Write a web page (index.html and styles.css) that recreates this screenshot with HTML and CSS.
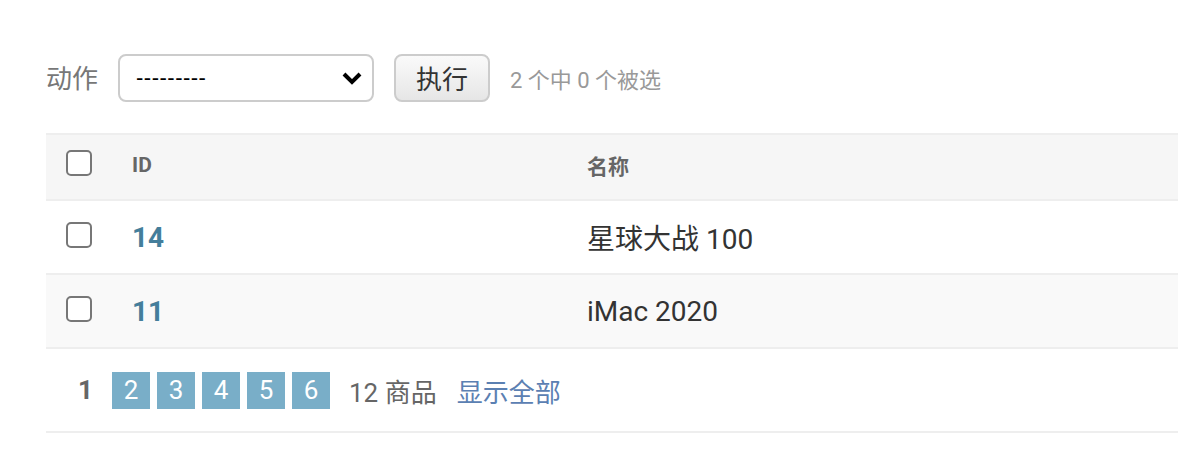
FILE: index.html
```html
<!DOCTYPE html>
<html lang="zh">
<head>
<meta charset="utf-8">
<title>商品</title>
<link rel="stylesheet" href="styles.css">
</head>
<body>
<div class="changelist">
  <div class="actions">
    <label class="action-label">动作</label>
    <div class="select">
      <span class="select-value">---------</span>
      <svg class="chevron" viewBox="0 0 20 14" width="20" height="14"><path d="M2 3 L10 11 L18 3" fill="none" stroke="#000" stroke-width="4" stroke-linejoin="miter"/></svg>
    </div>
    <button class="go">执行</button>
    <span class="counter">2 个中 0 个被选</span>
  </div>
  <table class="result-list">
    <colgroup><col class="c-check"><col class="c-id"><col></colgroup>
    <thead>
      <tr><th class="check"><span class="box"></span></th><th>ID</th><th>名称</th></tr>
    </thead>
    <tbody>
      <tr class="row1"><td class="check"><span class="box"></span></td><td class="id"><a href="#">14</a></td><td>星球大战 100</td></tr>
      <tr class="row2"><td class="check"><span class="box"></span></td><td class="id"><a href="#">11</a></td><td>iMac 2020</td></tr>
    </tbody>
  </table>
  <div class="paginator">
    <span class="this-page">1</span>
    <a class="page" href="#">2</a>
    <a class="page" href="#">3</a>
    <a class="page" href="#">4</a>
    <a class="page" href="#">5</a>
    <a class="page" href="#">6</a>
    <span class="total">12 商品</span>
    <a class="showall" href="#">显示全部</a>
  </div>
</div>
</body>
</html>
```
FILE: styles.css
```css
html, body {
  margin: 0;
  padding: 0;
  background: #fff;
}
body {
  font-family: Roboto, "Noto Sans CJK SC", sans-serif;
  color: #333;
}
.changelist {
  padding: 54px 0 0 46px;
}
.actions {
  display: flex;
  align-items: center;
  height: 48px;
  margin-bottom: 31px;
}
.action-label {
  font-size: 26px;
  color: #777;
  width: 72px;
  margin-top: -3px;
}
.select {
  box-sizing: border-box;
  width: 256px;
  height: 48px;
  border: 2px solid #ccc;
  border-radius: 8px;
  display: flex;
  align-items: center;
  justify-content: space-between;
  padding: 0 8px 0 16px;
  margin-right: 20px;
}
.select-value {
  font-size: 22px;
  color: #000;
  font-family: "Liberation Sans", sans-serif;
  letter-spacing: 0.5px;
}
.chevron {
  width: 20px;
  height: 14px;
  margin-right: 2px;
}
.go {
  box-sizing: border-box;
  width: 96px;
  height: 48px;
  border: 2px solid #ccc;
  border-radius: 8px;
  background: linear-gradient(#fafafa, #e6e6e6);
  font-family: Roboto, "Noto Sans CJK SC", sans-serif;
  font-size: 26px;
  color: #333;
  padding: 0 0 2px 0;
  margin-right: 20px;
}
.counter {
  font-size: 22px;
  color: #999;
}
.result-list {
  width: 100%;
  border-collapse: collapse;
  table-layout: fixed;
}
.c-check { width: 70px; }
.c-id { width: 455px; }
.result-list th {
  background: #f6f6f6;
  height: 59px;
  text-align: left;
  font-size: 21px;
  font-weight: 700;
  color: #666;
  padding: 0 16px 5px 16px;
  border-top: 2px solid #eee;
  border-bottom: 2px solid #eee;
}
.result-list td {
  height: 72px;
  padding: 0 16px;
  font-size: 28px;
  color: #333;
  border-bottom: 2px solid #eee;
  vertical-align: middle;
}
.result-list .check {
  padding-left: 20px;
  padding-right: 0;
}
.row2 td {
  background: #f9f9f9;
}
.box {
  display: block;
  box-sizing: border-box;
  width: 26px;
  height: 26px;
  border: 2px solid #777;
  border-radius: 5px;
  background: #fff;
  margin-top: -4px;
}
.id a {
  color: #447e9b;
  font-weight: 700;
  text-decoration: none;
}
.paginator {
  display: flex;
  align-items: center;
  height: 82px;
  border-bottom: 2px solid #eee;
  padding-left: 32px;
  font-size: 26px;
  color: #666;
}
.this-page {
  font-weight: 700;
  color: #666;
  width: 34px;
}
.page {
  box-sizing: border-box;
  display: flex;
  align-items: center;
  justify-content: center;
  width: 38px;
  height: 37px;
  background: #79aec8;
  color: #fff;
  text-decoration: none;
  margin-right: 7px;
}
.page:last-of-type {
  margin-right: 0;
}
.total {
  margin-left: 12px;
  margin-right: 20px;
}
.showall {
  color: #5b80b2;
  text-decoration: none;
}
```
